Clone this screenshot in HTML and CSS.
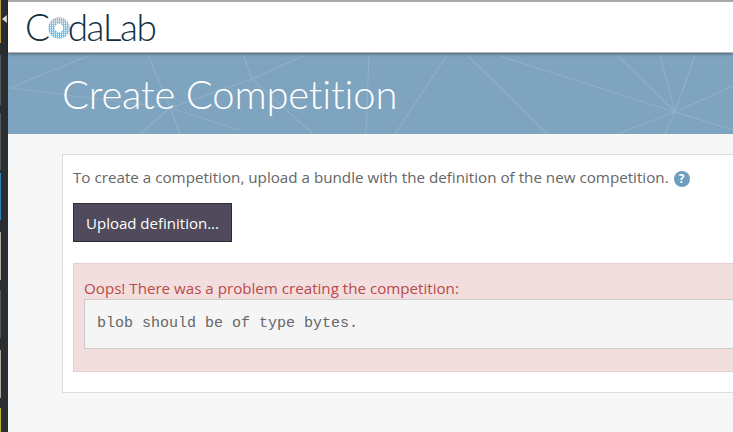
FILE: index.html
```html
<!DOCTYPE html>
<html lang="en">
<head>
  <meta charset="UTF-8" />
  <title>Create Competition</title>
  <link rel="stylesheet" href="styles.css">
</head>
<body>
  <div class="strip">
    <span class="strip-item item-gold"></span>
    <span class="strip-item item-dim1"></span>
    <span class="strip-item item-dim2"></span>
    <span class="strip-item item-blue"></span>
    <span class="strip-item item-light1"></span>
    <span class="strip-item item-dim3"></span>
    <span class="strip-item item-light2"></span>
    <span class="strip-item item-yellow"></span>
    <span class="strip-arrow"></span>
  </div>
  <div class="page">
    <header class="navbar">
      <div class="logo">
        <span>C</span>
        <svg class="logo-mark" width="22" height="24" viewBox="0 0 22 24">
          <defs>
            <pattern id="dots" width="2" height="1.8" patternUnits="userSpaceOnUse">
              <circle cx="0.5" cy="0.5" r="0.62" fill="#fff"/>
            </pattern>
            <linearGradient id="ball" x1="0" y1="0" x2="0" y2="1">
              <stop offset="0" stop-color="#9fb8c6"/>
              <stop offset="0.5" stop-color="#6cbce8"/>
              <stop offset="1" stop-color="#5cc2f0"/>
            </linearGradient>
          </defs>
          <circle cx="11" cy="12" r="7.5" fill="none" stroke="url(#ball)" stroke-width="6.5"/>
          <circle cx="11" cy="12" r="7.5" fill="none" stroke="url(#dots)" stroke-width="7"/>
        </svg>
        <span>daLab</span>
      </div>
    </header>
    <section class="banner">
      <svg class="banner-lines" width="725" height="82" viewBox="8 52 725 82">
        <g fill="none" stroke="#fff" stroke-opacity="0.13" stroke-width="1.2">
          <path d="M10 88 L90 55 M10 88 L170 108 M148 55 L170 108 L140 134 M170 108 L180 134 M170 108 L252 79 M170 108 L240 130"/>
          <path d="M243 55 L252 79 L313 134 M252 79 L305 55"/>
          <path d="M369 55 L366 134 M447 55 L395 134 M467 55 L547 134"/>
          <path d="M497 55 L675 112 M617 55 L675 112 M660 55 L675 112 M695 55 L675 112 L733 86 M675 112 L617 134 M675 112 L665 134 M675 112 L733 130"/>
        </g>
      </svg>
      <h1>Create Competition</h1>
    </section>
    <main class="content">
      <div class="card">
        <p class="intro">To create a competition, upload a bundle with the definition of the new competition. <span class="help">?</span></p>
        <button class="btn" type="button">Upload definition...</button>
        <div class="alert">
          <div class="alert-title">Oops! There was a problem creating the competition:</div>
          <pre class="alert-code">blob should be of type bytes.</pre>
        </div>
      </div>
    </main>
  </div>
</body>
</html>
```
FILE: styles.css
```css
html, body {
  margin: 0;
  height: 100%;
  overflow: hidden;
}
body {
  display: flex;
  font-family: "Open Sans", sans-serif;
  background: #f7f7f7;
  color: #666;
}
.strip {
  width: 8px;
  flex-shrink: 0;
  background: #2a2e31;
  display: flex;
  flex-direction: column;
  position: relative;
}
.strip-item {
  display: block;
  width: 1px;
}
.item-gold { height: 43px; background: #b59a3c; }
.item-dim1 { height: 50px; margin-top: 12px; background: #55585a; }
.item-dim2 { height: 57px; margin-top: 8px; background: #55585a; }
.item-blue { height: 47px; margin-top: 3px; background: #2c86bd; }
.item-light1 { height: 48px; margin-top: 12px; background: #a9a99c; }
.item-dim3 { height: 48px; margin-top: 10px; background: #55585a; }
.item-light2 { height: 48px; margin-top: 12px; background: #a9a99c; }
.item-yellow { height: 24px; margin-top: 10px; background: #b4b42e; }
.strip-arrow {
  position: absolute;
  left: 2px;
  top: 15px;
  border-style: solid;
  border-width: 4px 5px 4px 0;
  border-color: transparent #d8d8d8 transparent transparent;
}
.page {
  flex: 1;
  min-width: 0;
}
.navbar {
  height: 50px;
  border-top: 2px solid #a8a8a8;
  background: #fff;
  box-shadow: 0 1px 0 #b5b5b5, 0 2px 3px rgba(0, 0, 0, 0.4);
  position: relative;
  z-index: 1;
}
.logo {
  display: flex;
  align-items: center;
  padding: 3px 0 0 17px;
  font-family: "Lato", sans-serif;
  font-weight: 300;
  font-size: 37px;
  letter-spacing: -1.4px;
  color: #10303f;
  line-height: 44px;
}
.logo-mark {
  margin: 2px -2px 0 -1px;
}
.banner {
  height: 82px;
  background: #7fa4c0;
  position: relative;
  overflow: hidden;
}
.banner-lines {
  position: absolute;
  left: 0;
  top: 0;
}
.banner h1 {
  margin: 0;
  padding: 12px 0 0 54px;
  font-family: "Lato", sans-serif;
  font-weight: 300;
  font-size: 40px;
  letter-spacing: -0.2px;
  line-height: 60px;
  color: #fff;
  position: relative;
}
.content {
  padding: 20px 0 0 54px;
}
.card {
  background: #fff;
  border: 1px solid #ddd;
  border-right: none;
  padding: 9px 0 20px 10px;
}
.intro {
  margin: 0 0 13px;
  font-size: 15.2px;
  line-height: 26px;
}
.help {
  display: inline-block;
  width: 16px;
  height: 16px;
  border-radius: 50%;
  background: #6f9dbd;
  color: #fff;
  font-size: 12px;
  font-weight: 700;
  line-height: 16px;
  text-align: center;
  margin-left: 1px;
}
.btn {
  display: block;
  width: 159px;
  height: 39px;
  background: #504a5c;
  border: 1px solid #2e2b38;
  color: #fff;
  font-family: inherit;
  font-size: 15px;
  padding: 0;
}
.alert {
  margin-top: 21px;
  background: #f2dede;
  border: 1px solid #ebccd1;
  border-right: none;
  padding: 14px 0 22px 10px;
  color: #b94a48;
  font-size: 15.15px;
}
.alert-title {
  line-height: 21px;
}
.alert-code {
  margin: 0;
  background: #f5f5f5;
  border: 1px solid #ccc;
  border-right: none;
  padding: 13px 12px;
  height: 50px;
  box-sizing: border-box;
  font-family: "Liberation Mono", monospace;
  font-size: 15px;
  line-height: 22px;
  color: #666;
}
```
